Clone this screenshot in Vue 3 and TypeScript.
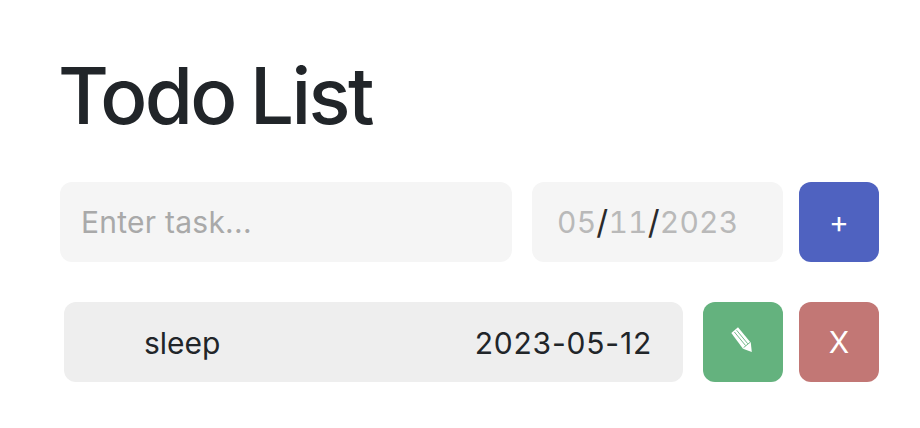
<script setup lang="ts">
const title: string = 'Todo List'
</script>

<template>
  <div class="page">
    <h1 class="title">{{ title }}</h1>
    <form class="row entry" @submit.prevent>
      <div class="field task-field">Enter task...</div>
      <div class="field date-field">
        <span class="dim">05</span><span class="slash">/</span><span class="dim">11</span><span class="slash">/</span><span class="dim">2023</span>
      </div>
      <button class="btn add" type="button">+</button>
    </form>
    <div class="row item">
      <div class="item-body">
        <span>sleep</span>
        <span class="date">2023-05-12</span>
      </div>
      <button class="btn edit" type="button" aria-label="Edit">
        <svg class="pencil" width="21" height="25" viewBox="0 0 21 25" fill="none">
          <path d="M0.3 6 L7 0.3 L19.8 15.8 L20.8 25 L12 21.8 Z" fill="#fff" />
          <path d="M3.4 5 L14.6 18.6 M5.6 3.2 L16.8 16.8" stroke="#64b27e" stroke-width="0.9" />
          <path d="M12.6 20.6 L19.2 15.2" stroke="#64b27e" stroke-width="0.9" />
        </svg>
      </button>
      <button class="btn del" type="button">X</button>
    </div>
  </div>
</template>

<style scoped>
.page {
  width: 920px;
  height: 428px;
  box-sizing: border-box;
  padding: 48px 41px 0 60px;
  font-family: Inter, "Liberation Sans", sans-serif;
  color: #212529;
  background: #fff;
}
.title {
  margin: 0 0 38px -2px;
  font-size: 78px;
  line-height: 96px;
  font-weight: 500;
  letter-spacing: -2.6px;
  word-spacing: -3px;
}
.row {
  display: flex;
  height: 80px;
}
.entry {
  margin-bottom: 40px;
}
.field {
  display: flex;
  align-items: center;
  box-sizing: border-box;
  background: #f5f5f5;
  border-radius: 12px;
  font-size: 30px;
  padding-left: 21px;
}
.task-field {
  width: 452px;
  color: #a9a9a9;
  letter-spacing: 0.25px;
}
.date-field {
  width: 251px;
  margin-left: 20px;
  padding-left: 25px;
  font-variant-numeric: tabular-nums;
  letter-spacing: 0.2px;
}
.dim {
  color: #b9b9b9;
}
.slash {
  font-size: 33px;
  color: #2a2a2a;
}
.btn {
  display: flex;
  align-items: center;
  justify-content: center;
  width: 80px;
  height: 80px;
  border: 0;
  border-radius: 12px;
  color: #fff;
  font-family: inherit;
  font-size: 30px;
  padding: 0;
}
.add {
  margin-left: 16px;
  background: #4f62c0;
}
.item {
  padding-left: 4px;
}
.item-body {
  flex: 1;
  display: flex;
  align-items: center;
  justify-content: space-between;
  background: #eeeeee;
  border-radius: 12px;
  font-size: 30px;
  padding: 2px 31px 0 80px;
}
.date {
  letter-spacing: 0.8px;
}
.edit {
  margin-left: 20px;
  padding: 0 3px 5px 0;
  background: #64b27e;
}
.del {
  margin-left: 16px;
  background: #c27775;
}
</style>

<style>
html, body { margin: 0; background: #fff; }
</style>
